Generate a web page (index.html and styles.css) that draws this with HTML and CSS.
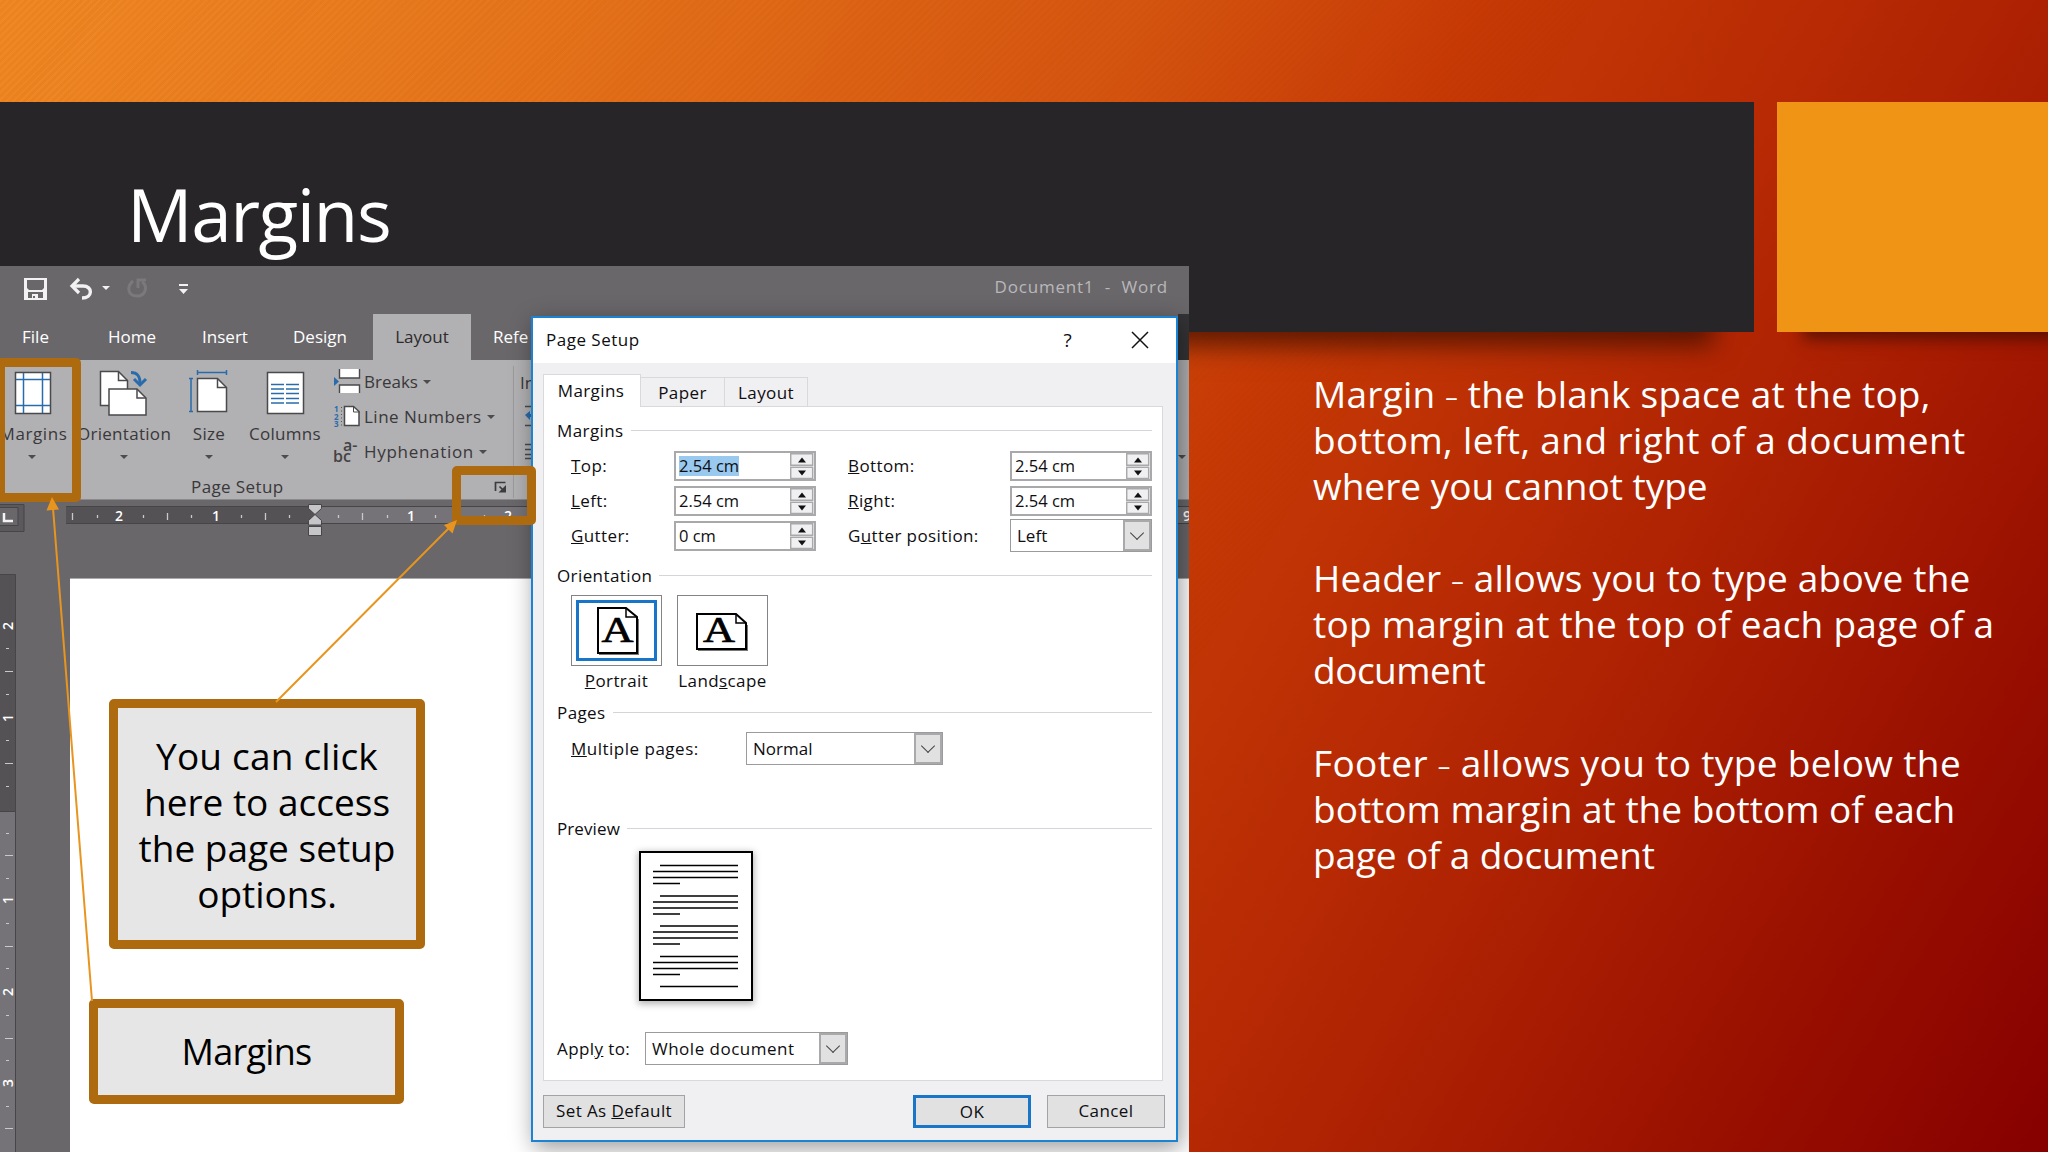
FILE: index.html
```html
<!DOCTYPE html>
<html lang="en">
<head>
	<meta charset="UTF-8">
	<meta name="viewport" content="width=device-width, initial-scale=1.0">
	<title>Margins</title>
	<link rel="stylesheet" href="styles.css">
</head>
<body>
	<div class="slide">
		<div class="header">
			<div class="banner"><h1>Margins</h1></div>
			<div class="accent"></div>
		</div>
		<div class="notes">
			<p><span class="n1">Margin <i>–</i> the blank space at the top,</span><br><span class="n2">bottom, left, and right of a document</span><br><span class="n3">where you cannot type</span></p>
			<p><span class="n4">Header <i>–</i> allows you to type above the</span><br><span class="n5">top margin at the top of each page of a</span><br><span class="n6">document</span></p>
			<p><span class="n7">Footer <i>–</i> allows you to type below the</span><br><span class="n8">bottom margin at the bottom of each</span><br><span class="n9">page of a document</span></p>
		</div>

		<div class="word">
			<div class="titlebar">
				<svg class="quick" width="200" height="48" viewBox="0 266 200 48">
					<path fill="#f2f2f2" fill-rule="evenodd" d="M24 278h23v22H24zM27 280v8l2 2h13l2-2v-8zM28 292v6h4v-4h6v4h5v-6zM33 296h2v2h-2z"/>
					<path fill="none" stroke="#f2f2f2" stroke-width="3.4" d="M72 286h11c10 0 10 12-1 12"/>
					<path fill="none" stroke="#f2f2f2" stroke-width="3.2" d="M79 279l-7 7 7 7"/>
					<path fill="#f2f2f2" d="M102 286h8l-4 4zM179 284h9v2h-9zM179 289h9l-4.500 5z"/>
					<path fill="none" stroke="#7b797c" stroke-width="3" d="M133 281c-7 6-5 15 4 15 9 0 11-10 5-14M138 288v-8h8"/>
				</svg>
				<span class="doc">Document1 &nbsp;- &nbsp;Word</span>
			</div>
			<div class="tabs">
				<span class="tab file">File</span>
				<span class="tab home">Home</span>
				<span class="tab insert">Insert</span>
				<span class="tab design">Design</span>
				<span class="tab current">Layout</span>
				<span class="tab refs">Refe</span>
				<span class="account"></span>
			</div>
			<div class="ribbon">
				<div class="group">
					<div class="tools">
						<div class="big b-margins">
							<svg width="48" height="50" viewBox="8 370 48 50"><path fill="#fff" stroke="#4a4a4c" stroke-width="1.500" d="M15.500 372.500h35v41h-35z"/><path stroke="#2a6cab" stroke-width="1.500" d="M23.500 373v40M42.500 373v40M16 379.500h34M16 405.500h34"/></svg>
							<span>Margins</span><i class="arrow"></i>
						</div>
						<div class="big b-orient">
							<svg width="52" height="50" viewBox="97 370 52 50"><path fill="#fff" stroke="#4a4a4c" stroke-width="1.500" d="M99.500 371.500h18l9 9v25h-27z"/><path fill="none" stroke="#4a4a4c" stroke-width="1.500" d="M117.500 372v8.500h9"/><path fill="#fff" stroke="#4a4a4c" stroke-width="1.500" d="M108 389h28l9 9v17h-37z"/><path fill="none" stroke="#4a4a4c" stroke-width="1.500" d="M136 389v9h9"/><path fill="none" stroke="#2a6cab" stroke-width="3" d="M130 372.500c6 0 9 3 9 11"/><path fill="none" stroke="#2a6cab" stroke-width="3" d="M133 379l6 6 6-6"/></svg>
							<span>Orientation</span><i class="arrow"></i>
						</div>
						<div class="big b-size">
							<svg width="42" height="50" viewBox="190 370 42 50"><path fill="#fff" stroke="#4a4a4c" stroke-width="1.500" d="M199.500 378.500h20l9 9v24h-29z"/><path fill="none" stroke="#4a4a4c" stroke-width="1.500" d="M219.500 379v8.500h9"/><path fill="none" stroke="#2a6cab" stroke-width="1.500" d="M199.500 370v5M228.500 370v5M199 372.500h29M191 378.500h4M191 411.500h4M193 378v33"/></svg>
							<span>Size</span><i class="arrow"></i>
						</div>
						<div class="big b-cols">
							<svg width="44" height="50" viewBox="262 370 44 50"><path fill="#fff" stroke="#4a4a4c" stroke-width="1.500" d="M266.500 372.500h36v41h-36z"/><path stroke="#2a6cab" stroke-width="1.400" d="M270 384.500h13M285 384.500h13M270 389h13M285 389h13M270 393.500h13M285 393.500h13M270 398.500h13M285 398.500h13M270 403h13M285 403h13"/></svg>
							<span>Columns</span><i class="arrow"></i>
						</div>
						<div class="smalls">
							<div class="small">
								<svg width="28" height="26" viewBox="332 368 28 26"><path fill="#fff" stroke="#4a4a4c" stroke-width="1.400" d="M338.500 368v9h20v-9M338.500 392v-8h20v8"/><path fill="#2a6cab" d="M333 376l5 4.500-5 4.500z"/></svg>
								<span class="t-breaks">Breaks</span><i class="arrow"></i>
							</div>
							<div class="small">
								<svg width="28" height="26" viewBox="332 403 28 26"><path fill="#fff" stroke="#4a4a4c" stroke-width="1.500" d="M343.500 405.500h9l5.500 5v14h-14.500z"/><path fill="none" stroke="#4a4a4c" d="M352.500 405v6h6"/><path stroke="#555" stroke-dasharray="1 2.500" d="M340.500 406v19"/><text x="333" y="411" class="num">1</text><text x="333" y="418.500" class="num">2</text><text x="333" y="426" class="num">3</text></svg>
								<span class="t-lines">Line Numbers</span><i class="arrow"></i>
							</div>
							<div class="small">
								<svg width="28" height="26" viewBox="332 438 28 26"><text x="332" y="461" class="hy">bc</text><text x="342" y="450" class="hy">a-</text></svg>
								<span class="t-hyph">Hyphenation</span><i class="arrow"></i>
							</div>
						</div>
					</div>
					<div class="caption"><span>Page Setup</span>
						<svg width="14" height="12" viewBox="493 481 14 12"><path fill="none" stroke="#3c3c3e" stroke-width="1.700" d="M495.500 491v-8.500h10M499.500 486.500l4 4"/><path fill="#3c3c3e" d="M506 485v7.500h-7.500z"/></svg>
					</div>
				</div>
				<div class="group next">
					<svg width="24" height="120" viewBox="514 365 24 120"><text x="520" y="388" class="ind">In</text><path stroke="#4a4a4c" stroke-width="1.500" d="M525 405.500h12M525 424.500h12M525 443.500h12M525 448.500h12M525 453.500h12M525 457.500h12"/><path fill="#2a6cab" d="M525 414l5-4v3h8v3h-8v3z"/></svg>
				</div>
				<i class="arrow far"></i>
			</div>

			<svg class="ruler" width="1189" height="38" viewBox="0 500 1189 38">
				<path fill="#5b595c" stroke="#464548" d="M-1 504.500h25v27H-1z"/><path fill="#69676a" stroke="#464548" d="M-1 507.500h19v18H-1z"/>
				<path fill="none" stroke="#f4f4f4" stroke-width="2.500" d="M4 513v8h9"/>
				<path fill="#545255" d="M66 507h248v16H66z"/><path fill="#757377" d="M314 507h875v16H314z"/><path stroke="#464548" d="M66 506.500h1123M66 523.500h1123"/>
				<path stroke="#c9c8ca" stroke-width="1.300" d="M72.500 513v7M97.500 515v3M143.500 515v3M167.500 513v7M191.500 515v3M241.500 515v3M265.500 513v7M289.500 515v3M338.500 515v3M362.500 513v7M387.500 515v3M435.500 515v3M459.500 513v7M484.500 515v3"/>
				<g class="digits"><text x="119" y="521">2</text><text x="216" y="521">1</text><text x="411" y="521">1</text><text x="508" y="521">2</text><text x="1187" y="521">9</text></g>
				<path fill="#c6c5c7" stroke="#464548" d="M308.500 504.500h13v4l-6.500 6-6.500-6zM308.500 525v-4.500l6.500-6 6.500 6v4.500zM308.500 526.500h13v9h-13z"/>
			</svg>
			<div class="workspace">
				<svg class="vruler" width="16" height="578" viewBox="0 574 16 578">
					<path fill="#545255" d="M0 574h15v237H0z"/><path fill="#757377" d="M0 811h15v341H0z"/><path fill="none" stroke="#464548" d="M0 574.500h15.500V1152M0 811.500h15"/>
					<path stroke="#c9c8ca" stroke-width="1.200" d="M6 648.500h3M5 671.500h8M6 694.500h3M6 740.500h3M5 763.500h8M6 786.500h3M6 833.500h3M5 855.500h8M6 878.500h3M6 923.500h3M5 946.500h8M6 968.500h3M6 1015.500h3M5 1038.500h8M6 1060.500h3M6 1106.500h3M5 1128.500h8"/>
					<g class="digits"><text transform="translate(13 626) rotate(-90)">2</text><text transform="translate(13 718) rotate(-90)">1</text><text transform="translate(13 900) rotate(-90)">1</text><text transform="translate(13 992) rotate(-90)">2</text><text transform="translate(13 1083) rotate(-90)">3</text></g>
				</svg>
				<div class="page"></div>
			</div>

			<div class="dialog">
				<div class="dlg-title">
					<span class="t-setup">Page Setup</span>
					<span class="help">?</span>
					<svg width="18" height="18" viewBox="0 0 18 18"><path fill="none" stroke="#111" stroke-width="1.500" d="M1 1l16 16M17 1L1 17"/></svg>
				</div>
				<div class="dlg-tabs">
					<span class="dt on">Margins</span><span class="dt paper">Paper</span><span class="dt lay">Layout</span>
				</div>
				<div class="panel">
					<div class="legend"><span>Margins</span></div>
					<div class="fields">
						<label><u>T</u>op:</label>
						<div class="spin"><span><mark>2.54 cm</mark></span><svg width="24" height="26" viewBox="0 0 24 26"><use href="#updown"/></svg></div>
						<label><u>B</u>ottom:</label>
						<div class="spin"><span>2.54 cm</span><svg width="24" height="26" viewBox="0 0 24 26"><use href="#updown"/></svg></div>
						<label><u>L</u>eft:</label>
						<div class="spin"><span>2.54 cm</span><svg width="24" height="26" viewBox="0 0 24 26"><use href="#updown"/></svg></div>
						<label><u>R</u>ight:</label>
						<div class="spin"><span>2.54 cm</span><svg width="24" height="26" viewBox="0 0 24 26"><use href="#updown"/></svg></div>
						<label><u>G</u>utter:</label>
						<div class="spin"><span>0 cm</span><svg width="24" height="26" viewBox="0 0 24 26"><g id="updown"><path fill="#f0eff1" stroke="#a9a8ab" stroke-width="1.500" d="M.7.700h22v11.500H.7zM.7 14.200h22v11.200H.7z"/><path fill="#111" d="M8 9.500h8L12 4.500zM8 17.500h8l-4 5z"/></g></svg></div>
						<label>G<u>u</u>tter position:</label><div class="combo"><span>Left</span><b></b></div>
					</div>
					<div class="legend l-orient"><span>Orientation</span></div>
					<div class="orients">
						<div class="orient">
							<div class="pic sel"><svg width="89" height="69" viewBox="0 0 89 69"><path fill="#777" d="M27 59h40V23h-2v34H27z"/><path fill="#fff" stroke="#000" stroke-width="2" d="M26 12h28l11 9v36H26z"/><path fill="none" stroke="#000" stroke-width="1.500" d="M54 12v9h11"/><text x="29.500" y="46" textLength="32" lengthAdjust="spacingAndGlyphs">A</text></svg></div>
							<span><u>P</u>ortrait</span>
						</div>
						<div class="orient">
							<div class="pic"><svg width="89" height="69" viewBox="0 0 89 69"><path fill="#777" d="M20 55h50V29h-2v24H20z"/><path fill="#fff" stroke="#000" stroke-width="2" d="M19 18h39l10 9v26H19z"/><path fill="none" stroke="#000" stroke-width="1.500" d="M58 18v9h10"/><text x="25" y="46" textLength="32" lengthAdjust="spacingAndGlyphs">A</text></svg></div>
							<span>Land<u>s</u>cape</span>
						</div>
					</div>
					<div class="legend l-pages"><span>Pages</span></div>
					<div class="row multi"><label><u>M</u>ultiple pages:</label><div class="combo"><span>Normal</span><b></b></div></div>
					<div class="legend l-prev"><span>Preview</span></div>
					<svg class="preview" width="114" height="150" viewBox="0 0 114 150">
						<path fill="#fff" stroke="#000" stroke-width="2" d="M1 1h112v148H1z"/>
						<path stroke="#000" stroke-width="1.600" d="M21 14.500h78M14 20.500h85M14 26.500h85M14 32.500h27M21 45h78M14 51h85M14 57h85M14 63h27M21 75h78M14 81h85M14 87h85M14 93h27M21 105.500h78M14 111.500h85M14 117.500h85M14 123.500h27M21 135.500h78"/>
					</svg>
					<div class="row apply"><label>Appl<u>y</u> to:</label><div class="combo"><span>Whole document</span><b></b></div></div>
				</div>
				<div class="buttons">
					<span class="button def">Set As <u>D</u>efault</span>
					<span class="button ok">OK</span>
					<span class="button">Cancel</span>
				</div>
			</div>
		</div>

		<div class="frame f-margins"></div>
		<div class="frame f-launcher"></div>
		<div class="callout c-setup"><span class="c1">You can click</span><span>here to access</span><span>the page setup</span><span>options.</span></div>
		<div class="callout c-margins"><span>Margins</span></div>
		<svg class="arrows" width="560" height="1010" viewBox="0 0 560 1010">
			<path stroke="#e8951f" stroke-width="2" d="M276 702L450 527M92 1001L53 508"/>
			<path fill="#e8951f" d="M457 520l-4.500 13.500-8.500-8.500zM52 497l7 12.500-12.500 1z"/>
		</svg>
	</div>
</body>
</html>
```
FILE: styles.css
```css
*{padding: 0;margin: 0;box-sizing: border-box;}
body{
	font-family: "Open Sans", "Noto Sans", sans-serif;
}
svg{
	display: block;
	flex: none;
}
.slide{
	width: 2048px;
	height: 1152px;
	padding-top: 102px;
	position: relative;
	overflow: hidden;
	background: linear-gradient(121deg, #f08823 0%, #e5731a 20%, #d4540f 42%, #c63a06 54%, #b12403 72%, #980f00 88%, #860000 100%);
}
/* fine diagonal hatching, fades out towards the dark corner */
.slide:before{
	content: "";
	position: absolute;
	inset: 0;
	background: repeating-linear-gradient(135deg, rgba(255,220,120,.03) 0 2px, rgba(120,40,0,.03) 2px 5px);
	-webkit-mask-image: linear-gradient(121deg, #000, transparent 62%);
	mask-image: linear-gradient(121deg, #000, transparent 62%);
}
.header{
	display: flex;
	gap: 23px;
	height: 230px;
	position: relative;
}
.banner{
	width: 1754px;
	background: #272528;
	padding: 57px 0 0 127px;
	box-shadow: -26px 28px 24px -14px rgba(60,15,0,.75);
}
.banner h1{
	font-size: 73px;
	font-weight: 400;
	line-height: 110px;
	color: #fff;
	letter-spacing: -1.500px;
}
.accent{
	width: 271px;
	background: #f09415;
	box-shadow: 18px 16px 14px -8px rgba(60,10,0,.65);
}
.notes{
	margin: 39px 0 0 1313px;
	color: #fff;
	font-size: 37px;
	line-height: 46.1px;
	white-space: nowrap;
	position: relative;
}
.notes p{
	margin-bottom: 46px;
}
.notes i{
	font-size: 25px;
	font-style: normal;
	vertical-align: 2px;
	line-height: 1;
}
.n1{letter-spacing: .22px;}
.n2{letter-spacing: .39px;}
.n4{letter-spacing: .2px;}
.n5{letter-spacing: .27px;}
.n6{letter-spacing: -.5px;}
.n7{letter-spacing: .36px;}
.n9{letter-spacing: -.14px;}

/* word window */
.word{
	position: absolute;
	left: 0;
	top: 266px;
	width: 1189px;
	height: 886px;
	overflow: hidden;
	background: #69676a;
	display: flex;
	flex-direction: column;
}
.titlebar{
	height: 48px;
	display: flex;
	justify-content: space-between;
	padding-right: 21px;
}
.doc{
	font-size: 17px;
	line-height: 42px;
	color: #b9b8ba;
	letter-spacing: .8px;
}
.tabs{
	height: 46px;
	display: flex;
	font-size: 17px;
	line-height: 45px;
	color: #fff;
}
.tab{
	text-align: center;
}
.file{width: 71px;}
.home{width: 122px;}
.insert{width: 64px;}
.design{width: 116px;padding-left: 10px;}
.current{
	width: 98px;
	background: #b1b0b2;
	color: #2c2b2d;
}
.refs{
	width: 707px;
	text-align: left;
	padding-left: 22px;
}
.account{
	flex: 1;
	background: #343336;
}
.ribbon{
	height: 140px;
	background: #b1b0b2;
	border-bottom: 1px solid #8b898c;
	display: flex;
	color: #39383a;
	position: relative;
}
.group{
	width: 514px;
	height: 132px;
	margin-top: 6px;
	border-right: 1px solid #9a999b;
}
.group.next{
	border: 0;
	width: 30px;
}
.tools{
	display: flex;
	height: 110px;
}
.big{
	display: flex;
	flex-direction: column;
	align-items: center;
	font-size: 17px;
	letter-spacing: .3px;
	padding-top: 4px;
}
.big span{
	line-height: 24px;
	margin-top: 2px;
	white-space: nowrap;
}
.b-margins{width: 64px;}
.b-margins span{
	letter-spacing: .6px;
	padding-left: 3px;
}
.b-orient{width: 120px;}
.b-size{width: 50px;}
.b-cols{width: 98px;padding-left: 4px;}
.arrow{
	width: 0;
	height: 0;
	border: 4px solid transparent;
	border-top-color: #4c4b4d;
	border-bottom: 0;
}
.big .arrow{
	margin-top: 9px;
}
.smalls{
	display: flex;
	flex-direction: column;
	margin-top: -2px;
}
.small{
	height: 35px;
	display: flex;
	align-items: center;
	font-size: 17px;
	padding-left: 1px;
	white-space: nowrap;
}
.small span{
	margin: 0 5px 0 3px;
}
.t-lines{letter-spacing: .5px;}
.t-hyph{letter-spacing: .7px;}
.num{
	font: bold 8px "Open Sans", sans-serif;
	fill: #2a6cab;
}
.hy{
	font: 600 16px "Open Sans", sans-serif;
	fill: #444345;
}
.ind{
	font: 17px "Open Sans", sans-serif;
	fill: #39383a;
}
.caption{
	height: 22px;
	display: flex;
	align-items: center;
	justify-content: space-between;
	padding: 0 6px 0 191px;
	font-size: 17px;
	line-height: 22px;
	letter-spacing: .4px;
}
.far{
	position: absolute;
	right: 3px;
	top: 95px;
}
.ruler{
	height: 38px;
}
.digits{
	font: 600 14px "Open Sans", sans-serif;
	fill: #fff;
	text-anchor: middle;
}
.workspace{
	display: flex;
	margin-top: 36px;
	height: 578px;
}
.page{
	width: 1119px;
	margin: 4px 0 0 54px;
	background: #fff;
	border-top: 1px solid #aaa9ab;
}

/* page setup dialog */
.dialog{
	position: absolute;
	left: 531px;
	top: 50px;
	width: 647px;
	height: 826px;
	border: 2px solid #1b83d3;
	background: #f0eff1;
	box-shadow: 3px 6px 22px rgba(0,0,0,.4);
	font-size: 17px;
	letter-spacing: .4px;
	color: #0e0d10;
	white-space: nowrap;
}
.dlg-title{
	height: 45px;
	background: #fff;
	display: flex;
	align-items: center;
	padding: 0 27px 2px 13px;
}
.help{
	margin-left: auto;
	margin-right: 59px;
	font-size: 19px;
}
.t-setup{letter-spacing: .5px;}
.dlg-tabs{
	display: flex;
	align-items: flex-end;
	height: 43px;
	padding-left: 10px;
}
.dt{
	height: 29px;
	line-height: 29px;
	border: 1px solid #d9d8db;
	border-left: 0;
	border-bottom: 0;
	text-align: center;
}
.dt.on{
	width: 98px;
	height: 33px;
	line-height: 32px;
	padding-right: 2px;
	border-left: 1px solid #d9d8db;
	background: #fff;
	position: relative;
	top: 1px;
}
.paper{width: 84px;}
.lay{width: 83px;}
.panel{
	width: 620px;
	height: 675px;
	margin-left: 10px;
	padding: 12px 10px 0 13px;
	background: #fff;
	border: 1px solid #d9d8db;
}
.legend{
	display: flex;
	align-items: center;
	height: 22px;
}
.legend:after{
	content: "";
	flex: 1;
	height: 1px;
	margin-left: 7px;
	background: #d5d4d8;
}
.fields{
	display: grid;
	grid-template-columns: 102px 175px 161px 142px;
	grid-auto-rows: 35px;
	margin: 7px 0 0 15px;
	align-items: center;
}
.fields label{
	position: relative;
	left: -1px;
}
.spin, .combo{
	display: flex;
	width: 142px;
	height: 30px;
	border: 2px solid #a9a8ab;
	background: #fff;
	align-items: center;
	letter-spacing: 0;
}
.spin span{
	flex: 1;
	padding-left: 3px;
	font-size: 16.500px;
}
mark{
	background: #99c9ef;
	color: inherit;
	display: inline-block;
	line-height: 20px;
}
.combo{
	height: 33px;
	border-width: 1px;
	border-color: #9b9a9d;
}
.combo span{
	flex: 1;
	padding-left: 6px;
}
.combo b{
	width: 28px;
	height: 31px;
	border: 2px solid #a9a8ab;
	background: #e1e1e2;
	display: flex;
	justify-content: center;
}
.combo b:after{
	content: "";
	width: 9px;
	height: 9px;
	margin-top: 6px;
	border: solid #444;
	border-width: 0 1.500px 1.500px 0;
	transform: rotate(45deg);
}
.l-orient{margin-top: 11px;}
.orients{
	display: flex;
	gap: 15px;
	margin: 9px 0 0 14px;
}
.orient{
	width: 91px;
	text-align: center;
	line-height: 24px;
}
.pic{
	height: 71px;
	border: 1px solid #848386;
	margin-bottom: 3px;
}
.pic text{
	font: 36px "Liberation Serif", serif;
	letter-spacing: 0;
	stroke: #000;
	stroke-width: .7px;
}
.sel{
	outline: 3px solid #1875c8;
	outline-offset: -8px;
}
.l-pages{margin-top: 8px;}
.row{
	display: flex;
	align-items: center;
}
.multi{margin: 9px 0 0 14px;}
.multi label{width: 175px;letter-spacing: .5px;}
.multi .combo{width: 197px;}
.l-prev{margin-top: 52px;}
.l-prev span{letter-spacing: .1px;}
.preview{
	margin: 12px 0 0 82px;
	box-shadow: 0 2px 7px 1px rgba(0,0,0,.3);
}
.apply{margin-top: 31px;}
.apply label{width: 88px;}
.apply .combo{width: 203px;letter-spacing: .5px;}
.buttons{
	display: flex;
	gap: 16px;
	margin: 14px 11px 0 10px;
}
.button{
	width: 118px;
	height: 33px;
	line-height: 30px;
	text-align: center;
	background: #e1e1e2;
	border: 1px solid #a3a2a5;
}
.def{
	width: 142px;
	margin-right: auto;
}
.ok{
	border: 3px solid #1875c8;
	line-height: 27px;
}

/* annotations drawn over the window */
.frame, .callout{
	position: absolute;
	border: 9px solid #ae6a0e;
	border-radius: 5px;
}
.f-margins{
	left: -4px;
	top: 358px;
	width: 85px;
	height: 144px;
}
.f-launcher{
	left: 452px;
	top: 466px;
	width: 84px;
	height: 59px;
}
.callout{
	display: flex;
	flex-direction: column;
	align-items: center;
	justify-content: center;
	background: #e7e6e6;
	font-size: 37px;
	line-height: 46.1px;
	color: #000;
	white-space: nowrap;
	padding-top: 2px;
}
.c-setup{
	left: 109px;
	top: 699px;
	width: 316px;
	height: 250px;
}
.c1{letter-spacing: .2px;}
.c-margins{
	left: 89px;
	top: 999px;
	width: 315px;
	height: 105px;
	font-size: 36px;
	letter-spacing: -.700px;
}
.arrows{
	position: absolute;
	left: 0;
	top: 0;
}
```
